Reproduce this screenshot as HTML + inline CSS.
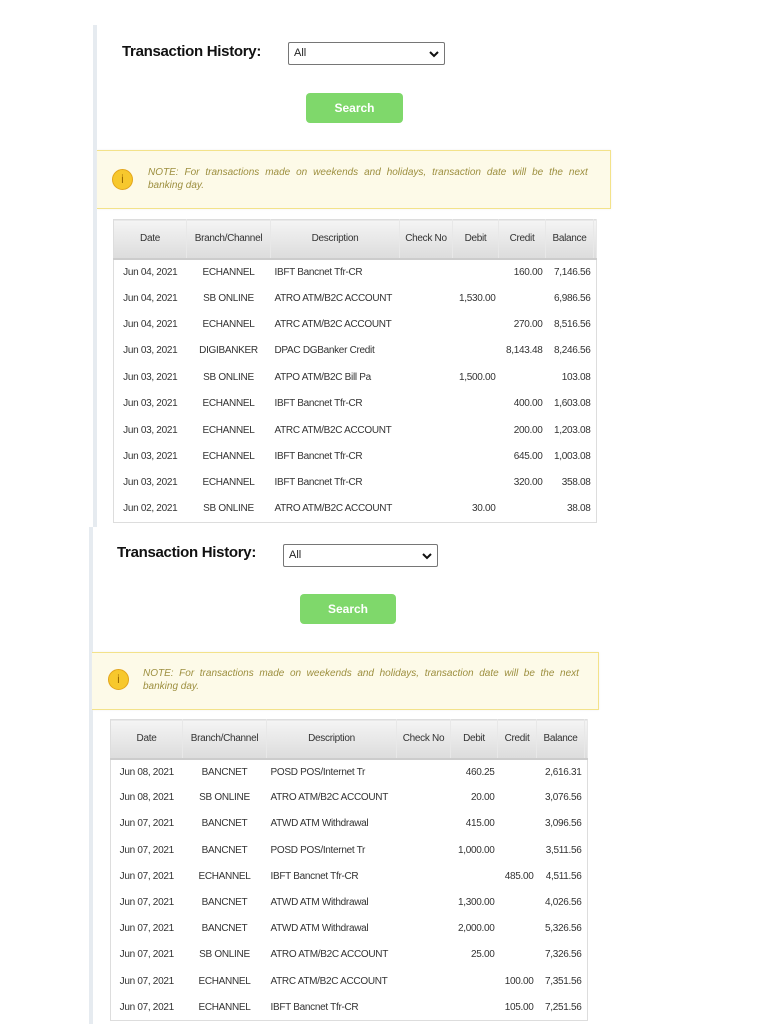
<!DOCTYPE html>
<html><head><style>
*{margin:0;padding:0;box-sizing:border-box}
body{width:768px;height:1024px;background:#fff;position:relative;overflow:hidden;font-family:"Liberation Sans",sans-serif;color:#222}
.vl{position:absolute;width:4px;background:#e6ebf0}
.title{position:absolute;font-weight:bold;font-size:15px;letter-spacing:-0.3px;color:#111}
.sel{position:absolute;border:1px solid #767676;border-radius:2px;background:#fff;font-size:11px;padding:4px 5px;height:23px}
.sel svg{position:absolute;right:5px;top:8px}
.btn{position:absolute;background:#7fd86b;border-radius:4px;color:#fff;font-weight:bold;font-size:12px;text-align:center}
.note{position:absolute;background:#fdfae8;border:1px solid #f3e28a;border-left:none;box-shadow:0 0 2px #eee}
.note .ic{position:absolute;width:21px;height:21px;border-radius:50%;background:#f7c82d;border:1px solid #e3a51b;color:#9a6a00;font-size:12px;text-align:center;line-height:19px}
.note .t{position:absolute;font-style:italic;font-size:10px;color:#9d8f3f;line-height:13px}
.note .t .a{text-align:justify;text-align-last:justify;white-space:nowrap;display:block}
table{position:absolute;border-collapse:collapse;table-layout:fixed;font-size:10px;border:1px solid #ddd;letter-spacing:-0.3px}
th{background:linear-gradient(#f4f4f4,#dcdcdc);font-weight:normal;color:#333;border-right:1px solid #e8e8e8;border-bottom:2px solid #ccc}
td{white-space:nowrap;color:#333}
td.c{text-align:center}
td.l{padding-left:4px}
td.r{text-align:right;padding-right:3px}
</style></head><body>

<div class="vl" style="left:93px;top:25px;height:502px"></div>
<div class="title" style="left:122px;top:43px">Transaction History:</div>
<div class="sel" style="left:288px;top:42px;width:157px">All<svg width="10" height="7" viewBox="0 0 10 7"><path d="M1 1l4 4 4-4" stroke="#111" stroke-width="2" fill="none"/></svg></div>
<div class="btn" style="left:306px;top:93px;width:97px;height:30px;line-height:30px">Search</div>
<div class="note" style="left:97px;top:150px;width:514px;height:59px">
<div class="ic" style="left:15px;top:18px">i</div>
<div class="t" style="left:51px;top:15px;width:440px"><span class="a" style="display:flex;justify-content:space-between"><span>NOTE:</span><span>For</span><span>transactions</span><span>made</span><span>on</span><span>weekends</span><span>and</span><span>holidays,</span><span>transaction</span><span>date</span><span>will</span><span>be</span><span>the</span><span>next</span></span>banking day.</div>
</div>
<table style="left:113px;top:219px;width:483px">
<colgroup><col style="width:73px"><col style="width:84px"><col style="width:129px"><col style="width:53px"><col style="width:46px"><col style="width:47px"><col style="width:48px"><col style="width:3px"></colgroup>
<tr style="height:39px"><th>Date</th><th>Branch/Channel</th><th>Description</th><th>Check No</th><th>Debit</th><th>Credit</th><th>Balance</th><th></th></tr>
<tr style="height:26.4px"><td class="c">Jun 04, 2021</td><td class="c">ECHANNEL</td><td class="l">IBFT Bancnet Tfr-CR</td><td></td><td class="r"></td><td class="r">160.00</td><td class="r">7,146.56</td><td></td></tr>
<tr style="height:26.4px"><td class="c">Jun 04, 2021</td><td class="c">SB ONLINE</td><td class="l">ATRO ATM/B2C ACCOUNT</td><td></td><td class="r">1,530.00</td><td class="r"></td><td class="r">6,986.56</td><td></td></tr>
<tr style="height:26.4px"><td class="c">Jun 04, 2021</td><td class="c">ECHANNEL</td><td class="l">ATRC ATM/B2C ACCOUNT</td><td></td><td class="r"></td><td class="r">270.00</td><td class="r">8,516.56</td><td></td></tr>
<tr style="height:26.4px"><td class="c">Jun 03, 2021</td><td class="c">DIGIBANKER</td><td class="l">DPAC DGBanker Credit</td><td></td><td class="r"></td><td class="r">8,143.48</td><td class="r">8,246.56</td><td></td></tr>
<tr style="height:26.4px"><td class="c">Jun 03, 2021</td><td class="c">SB ONLINE</td><td class="l">ATPO ATM/B2C Bill Pa</td><td></td><td class="r">1,500.00</td><td class="r"></td><td class="r">103.08</td><td></td></tr>
<tr style="height:26.4px"><td class="c">Jun 03, 2021</td><td class="c">ECHANNEL</td><td class="l">IBFT Bancnet Tfr-CR</td><td></td><td class="r"></td><td class="r">400.00</td><td class="r">1,603.08</td><td></td></tr>
<tr style="height:26.4px"><td class="c">Jun 03, 2021</td><td class="c">ECHANNEL</td><td class="l">ATRC ATM/B2C ACCOUNT</td><td></td><td class="r"></td><td class="r">200.00</td><td class="r">1,203.08</td><td></td></tr>
<tr style="height:26.4px"><td class="c">Jun 03, 2021</td><td class="c">ECHANNEL</td><td class="l">IBFT Bancnet Tfr-CR</td><td></td><td class="r"></td><td class="r">645.00</td><td class="r">1,003.08</td><td></td></tr>
<tr style="height:26.4px"><td class="c">Jun 03, 2021</td><td class="c">ECHANNEL</td><td class="l">IBFT Bancnet Tfr-CR</td><td></td><td class="r"></td><td class="r">320.00</td><td class="r">358.08</td><td></td></tr>
<tr style="height:26.4px"><td class="c">Jun 02, 2021</td><td class="c">SB ONLINE</td><td class="l">ATRO ATM/B2C ACCOUNT</td><td></td><td class="r">30.00</td><td class="r"></td><td class="r">38.08</td><td></td></tr>
</table>

<div class="vl" style="left:89px;top:527px;height:497px"></div>
<div class="title" style="left:117px;top:544px">Transaction History:</div>
<div class="sel" style="left:283px;top:544px;width:155px">All<svg width="10" height="7" viewBox="0 0 10 7"><path d="M1 1l4 4 4-4" stroke="#111" stroke-width="2" fill="none"/></svg></div>
<div class="btn" style="left:300px;top:594px;width:96px;height:30px;line-height:30px">Search</div>
<div class="note" style="left:92px;top:652px;width:507px;height:58px">
<div class="ic" style="left:16px;top:16px">i</div>
<div class="t" style="left:51px;top:14px;width:436px"><span class="a" style="display:flex;justify-content:space-between"><span>NOTE:</span><span>For</span><span>transactions</span><span>made</span><span>on</span><span>weekends</span><span>and</span><span>holidays,</span><span>transaction</span><span>date</span><span>will</span><span>be</span><span>the</span><span>next</span></span>banking day.</div>
</div>
<table style="left:110px;top:719px;width:477px">
<colgroup><col style="width:72px"><col style="width:84px"><col style="width:130px"><col style="width:54px"><col style="width:47px"><col style="width:39px"><col style="width:48px"><col style="width:3px"></colgroup>
<tr style="height:39px"><th>Date</th><th>Branch/Channel</th><th>Description</th><th>Check No</th><th>Debit</th><th>Credit</th><th>Balance</th><th></th></tr>
<tr style="height:26.2px"><td class="c">Jun 08, 2021</td><td class="c">BANCNET</td><td class="l">POSD POS/Internet Tr</td><td></td><td class="r">460.25</td><td class="r"></td><td class="r">2,616.31</td><td></td></tr>
<tr style="height:26.2px"><td class="c">Jun 08, 2021</td><td class="c">SB ONLINE</td><td class="l">ATRO ATM/B2C ACCOUNT</td><td></td><td class="r">20.00</td><td class="r"></td><td class="r">3,076.56</td><td></td></tr>
<tr style="height:26.2px"><td class="c">Jun 07, 2021</td><td class="c">BANCNET</td><td class="l">ATWD ATM Withdrawal</td><td></td><td class="r">415.00</td><td class="r"></td><td class="r">3,096.56</td><td></td></tr>
<tr style="height:26.2px"><td class="c">Jun 07, 2021</td><td class="c">BANCNET</td><td class="l">POSD POS/Internet Tr</td><td></td><td class="r">1,000.00</td><td class="r"></td><td class="r">3,511.56</td><td></td></tr>
<tr style="height:26.2px"><td class="c">Jun 07, 2021</td><td class="c">ECHANNEL</td><td class="l">IBFT Bancnet Tfr-CR</td><td></td><td class="r"></td><td class="r">485.00</td><td class="r">4,511.56</td><td></td></tr>
<tr style="height:26.2px"><td class="c">Jun 07, 2021</td><td class="c">BANCNET</td><td class="l">ATWD ATM Withdrawal</td><td></td><td class="r">1,300.00</td><td class="r"></td><td class="r">4,026.56</td><td></td></tr>
<tr style="height:26.2px"><td class="c">Jun 07, 2021</td><td class="c">BANCNET</td><td class="l">ATWD ATM Withdrawal</td><td></td><td class="r">2,000.00</td><td class="r"></td><td class="r">5,326.56</td><td></td></tr>
<tr style="height:26.2px"><td class="c">Jun 07, 2021</td><td class="c">SB ONLINE</td><td class="l">ATRO ATM/B2C ACCOUNT</td><td></td><td class="r">25.00</td><td class="r"></td><td class="r">7,326.56</td><td></td></tr>
<tr style="height:26.2px"><td class="c">Jun 07, 2021</td><td class="c">ECHANNEL</td><td class="l">ATRC ATM/B2C ACCOUNT</td><td></td><td class="r"></td><td class="r">100.00</td><td class="r">7,351.56</td><td></td></tr>
<tr style="height:26.2px"><td class="c">Jun 07, 2021</td><td class="c">ECHANNEL</td><td class="l">IBFT Bancnet Tfr-CR</td><td></td><td class="r"></td><td class="r">105.00</td><td class="r">7,251.56</td><td></td></tr>
</table>
</body></html>
